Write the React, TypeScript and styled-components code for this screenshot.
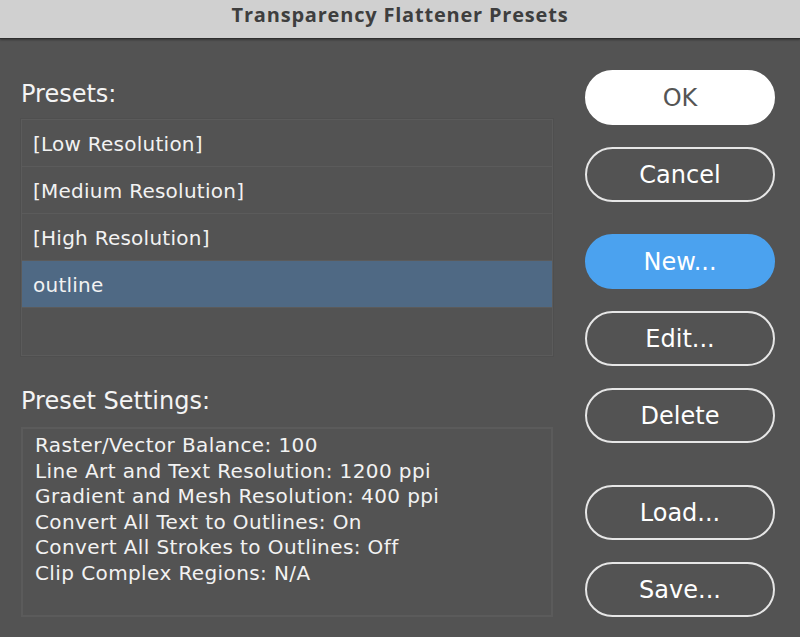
import styled, { createGlobalStyle } from 'styled-components';

const GlobalStyle = createGlobalStyle`
  html, body {
    margin: 0;
    padding: 0;
    background: #535353;
  }
  body {
    font-family: "DejaVu Sans", "Liberation Sans", sans-serif;
    color: #f2f2f2;
  }
`;

const presets = ['[Low Resolution]', '[Medium Resolution]', '[High Resolution]', 'outline'];

const settings = [
  'Raster/Vector Balance: 100',
  'Line Art and Text Resolution: 1200 ppi',
  'Gradient and Mesh Resolution: 400 ppi',
  'Convert All Text to Outlines: On',
  'Convert All Strokes to Outlines: Off',
  'Clip Complex Regions: N/A',
];

const App = () => {
  return (
    <Dialog>
      <GlobalStyle />
      <TitleBar>Transparency Flattener Presets</TitleBar>
      <Body>
        <LeftColumn>
          <SectionLabel>Presets:</SectionLabel>
          <PresetList>
            {presets.map((name) => (
              <PresetRow key={name} $selected={name === 'outline'}>
                {name}
              </PresetRow>
            ))}
          </PresetList>
          <SectionLabel $mt={31}>Preset Settings:</SectionLabel>
          <SettingsBox>
            {settings.map((line) => (
              <SettingLine key={line}>{line}</SettingLine>
            ))}
          </SettingsBox>
        </LeftColumn>
        <ButtonColumn>
          <DialogButton $variant="default">OK</DialogButton>
          <DialogButton>Cancel</DialogButton>
          <DialogButton $variant="primary" $mt={10}>
            New...
          </DialogButton>
          <DialogButton>Edit...</DialogButton>
          <DialogButton>Delete</DialogButton>
          <DialogButton $mt={20}>Load...</DialogButton>
          <DialogButton>Save...</DialogButton>
        </ButtonColumn>
      </Body>
    </Dialog>
  );
};

export default App;

const Dialog = styled.div`
  width: 800px;
  height: 637px;
  display: flex;
  flex-direction: column;
  background: #535353;
  overflow: hidden;
`;

const TitleBar = styled.div`
  height: 39px;
  flex-shrink: 0;
  box-sizing: border-box;
  display: flex;
  align-items: center;
  justify-content: center;
  padding-bottom: 8px;
  background: #d0d0d0;
  border-bottom: 1px solid #2e2e2e;
  box-shadow: 0 1px 2px rgba(0, 0, 0, 0.35);
  color: #3e3e3e;
  font-family: "Open Sans", Roboto, sans-serif;
  font-weight: 700;
  font-size: 20px;
  line-height: 24px;
  letter-spacing: 0.8px;
`;

const Body = styled.div`
  flex: 1;
  display: flex;
  padding: 31px 25px 0 21px;
  gap: 32px;
`;

const LeftColumn = styled.div`
  width: 532px;
  display: flex;
  flex-direction: column;
  padding-top: 10px;
`;

const SectionLabel = styled.div<{ $mt?: number }>`
  font-size: 24px;
  line-height: 28px;
  color: #f4f4f4;
  margin-top: ${(p) => p.$mt ?? 0}px;
`;

const PresetList = styled.div`
  margin-top: 11px;
  height: 237px;
  box-sizing: border-box;
  border: 1px solid #5b5b5b;
  outline: 1px solid #4f4f4f;
  display: flex;
  flex-direction: column;
`;

const PresetRow = styled.div<{ $selected?: boolean }>`
  height: 47px;
  flex-shrink: 0;
  box-sizing: border-box;
  border-bottom: 1px solid #5b5b5b;
  padding: 2px 0 0 11px;
  display: flex;
  align-items: center;
  font-size: 20px;
  letter-spacing: 0.25px;
  color: #f2f2f2;
  background: ${(p) => (p.$selected ? '#4f6984' : 'transparent')};
`;

const SettingsBox = styled.div`
  margin-top: 12px;
  height: 190px;
  box-sizing: border-box;
  border: 2px solid #5b5b5b;
  padding: 4px 12px;
`;

const SettingLine = styled.div`
  font-size: 20px;
  line-height: 25.6px;
  letter-spacing: 0.4px;
  color: #f2f2f2;
  white-space: nowrap;
`;

const ButtonColumn = styled.div`
  width: 190px;
  display: flex;
  flex-direction: column;
  gap: 22px;
`;

const DialogButton = styled.button<{ $variant?: 'default' | 'primary'; $mt?: number }>`
  height: 55px;
  width: 190px;
  flex-shrink: 0;
  box-sizing: border-box;
  border-radius: 28px;
  margin-top: ${(p) => p.$mt ?? 0}px;
  font-family: "DejaVu Sans", "Liberation Sans", sans-serif;
  font-size: 24px;
  padding: 0;
  cursor: pointer;
  border: 2px solid
    ${(p) => (p.$variant === 'default' ? '#ffffff' : p.$variant === 'primary' ? '#4ba2ef' : '#e6e6e6')};
  background: ${(p) => (p.$variant === 'default' ? '#ffffff' : p.$variant === 'primary' ? '#4ba2ef' : 'transparent')};
  color: ${(p) => (p.$variant === 'default' ? '#555555' : '#ffffff')};
`;
